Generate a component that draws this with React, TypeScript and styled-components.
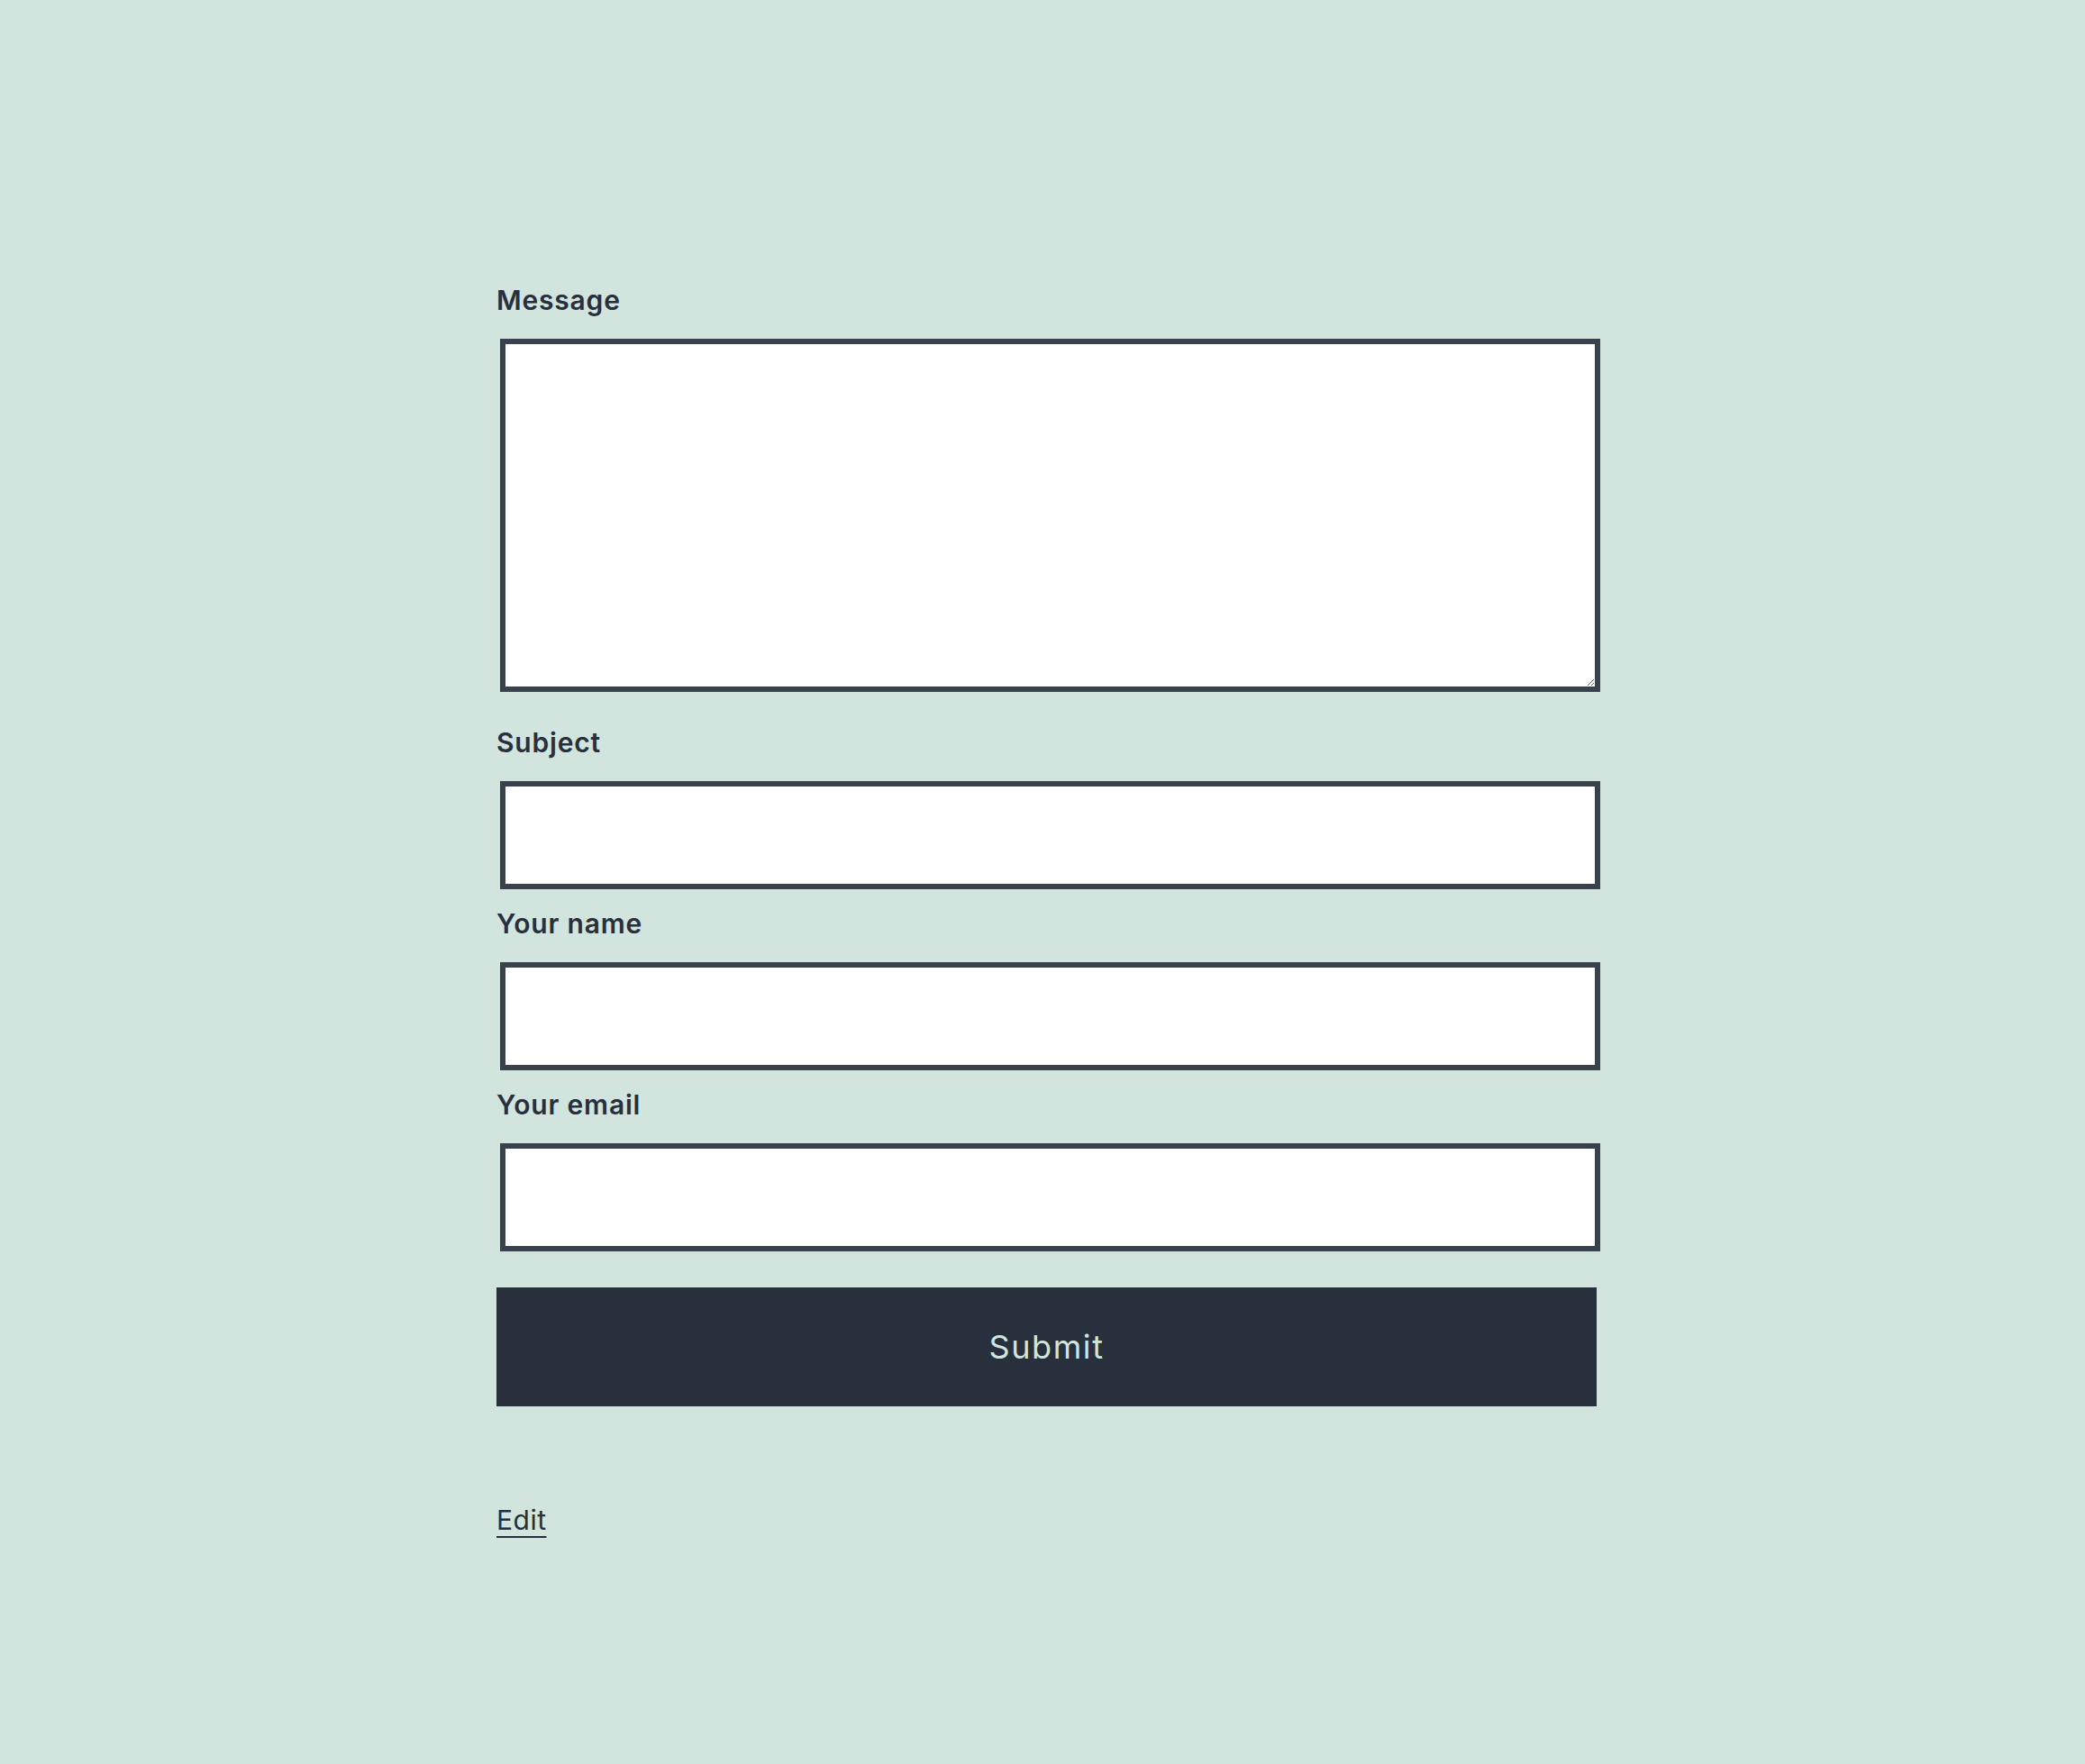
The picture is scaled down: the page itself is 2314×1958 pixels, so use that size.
import React from 'react';
import styled, { createGlobalStyle } from 'styled-components';

const GlobalStyle = createGlobalStyle`
  html, body {
    margin: 0;
    padding: 0;
    background-color: #d1e4dd;
  }

  body {
    font-family: Inter, "Noto Sans", "Liberation Sans", sans-serif;
    color: #28303d;
  }

  *, *::before, *::after {
    box-sizing: border-box;
  }
`;

const Page = styled.main`
  min-height: 1958px;
  padding: 311px 0 0 9px;
`;

const Form = styled.form`
  width: 1221px;
  margin: 0 auto;
  display: flex;
  flex-direction: column;
`;

const Field = styled.div<{ $spacing: number }>`
  display: flex;
  flex-direction: column;
  margin-bottom: ${({ $spacing }) => $spacing}px;
`;

const Label = styled.label`
  font-size: 30px;
  line-height: 45px;
  font-weight: 600;
  letter-spacing: 0.8px;
  color: #28303d;
  margin-bottom: 20px;
`;

const inputBase = `
  display: block;
  width: 100%;
  margin: 0 0 0 4px;
  border: 6px solid #39414d;
  border-radius: 0;
  background: #ffffff;
  font-family: Inter, "Noto Sans", sans-serif;
  font-size: 30px;
  color: #28303d;
  padding: 10px 16px;
  outline: none;
`;

const TextArea = styled.textarea`
  ${inputBase}
  height: 392px;
  resize: vertical;
`;

const TextInput = styled.input`
  ${inputBase}
  height: 120px;
`;

const SubmitButton = styled.button`
  margin-top: 24px;
  height: 132px;
  width: 100%;
  border: none;
  border-radius: 0;
  background-color: #28303d;
  color: #d1e4dd;
  font-family: Inter, "Noto Sans", sans-serif;
  font-size: 36px;
  font-weight: 400;
  letter-spacing: 1.6px;
  cursor: pointer;
`;

const Footer = styled.div`
  width: 1221px;
  margin: 104px auto 0;
`;

const EditLink = styled.a`
  font-size: 30px;
  line-height: 45px;
  letter-spacing: 0.5px;
  color: #28303d;
  text-decoration: underline;
  text-decoration-thickness: 2px;
  text-underline-offset: 7px;
`;

const fields = [
  { id: 'subject', label: 'Subject', type: 'text' },
  { id: 'name', label: 'Your name', type: 'text' },
  { id: 'email', label: 'Your email', type: 'email' },
];

export default function App() {
  return (
    <>
      <GlobalStyle />
      <Page>
        <Form onSubmit={(e) => e.preventDefault()}>
          <Field $spacing={34}>
            <Label htmlFor="message">Message</Label>
            <TextArea id="message" />
          </Field>
          {fields.map((f) => (
            <Field key={f.id} $spacing={16}>
              <Label htmlFor={f.id}>{f.label}</Label>
              <TextInput id={f.id} type={f.type} />
            </Field>
          ))}
          <SubmitButton type="submit">Submit</SubmitButton>
        </Form>
        <Footer>
          <EditLink href="#">Edit</EditLink>
        </Footer>
      </Page>
    </>
  );
}
